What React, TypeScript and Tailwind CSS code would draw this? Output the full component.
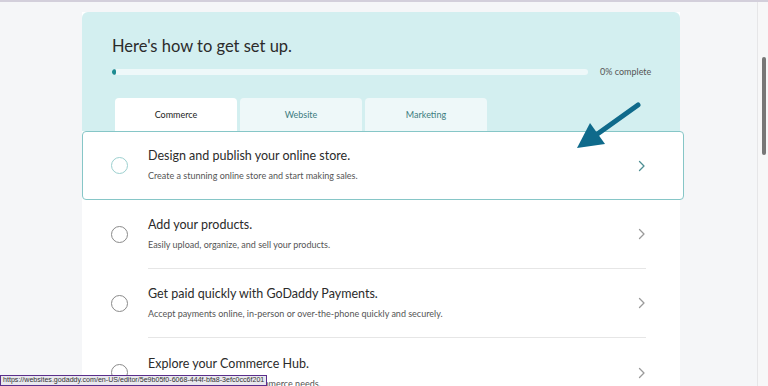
import React from 'react';

const tasks = [
  { title: 'Design and publish your online store.', sub: 'Create a stunning online store and start making sales.', active: true },
  { title: 'Add your products.', sub: 'Easily upload, organize, and sell your products.' },
  { title: 'Get paid quickly with GoDaddy Payments.', sub: 'Accept payments online, in-person or over-the-phone quickly and securely.' },
  { title: 'Explore your Commerce Hub.', sub: 'Track and manage all your commerce needs.' },
];

const tabs = ['Commerce', 'Website', 'Marketing'];

function Chevron({ active }: { active?: boolean }) {
  return (
    <svg width="8" height="12" viewBox="0 0 8 12" className="shrink-0">
      <polyline points="1.5,1.5 6,6 1.5,10.5" fill="none" stroke={active ? '#4d8e93' : '#9a9a9a'} strokeWidth="1.3" strokeLinecap="round" strokeLinejoin="round" />
    </svg>
  );
}

function TaskRow({ title, sub, active, last }: { title: string; sub: string; active?: boolean; last?: boolean }) {
  if (active) {
    return (
      <div className="h-[69px] -mr-[4px] flex items-center pl-[28px] pr-[37px] bg-white border-[1.5px] border-[#86c6c7] rounded-[4px]">
        <div className="w-[17px] h-[17px] rounded-full border-[1.5px] border-[#9cd0cf] shrink-0" />
        <div className="flex-1 ml-[20px] pb-[1px]">
          <div className="text-[12.5px] leading-[16px] text-[#2b2b2b]">{title}</div>
          <div className="text-[9px] leading-[12px] mt-[6px] text-[#555]">{sub}</div>
        </div>
        <Chevron active />
      </div>
    );
  }
  return (
    <div className="h-[69px] flex items-center pl-[29px] pr-[34px]">
      <div className="w-[17px] h-[17px] rounded-full border-[1.5px] border-[#8a8a8a] shrink-0" />
      <div className={'flex-1 self-stretch flex items-center ml-[20px]' + (last ? '' : ' border-b border-[#e6e6e6]')}>
        <div className="flex-1 -ml-[33px] pl-[33px]">
          <div className="text-[12.5px] leading-[16px] text-[#2b2b2b]">{title}</div>
          <div className="text-[9px] leading-[12px] mt-[6px] text-[#555]">{sub}</div>
        </div>
        <Chevron />
      </div>
    </div>
  );
}

export default function App() {
  return (
    <div className="relative w-[768px] h-[386px] overflow-hidden bg-[#f5f6f8] border-t-2 border-[#d3cfdb] flex font-['Lato',sans-serif]">
      <div className="flex-1 pl-[82px] pr-[77px] pt-[10px]">
        <div className="h-full bg-white flex flex-col">
          {/* Setup header */}
          <div className="bg-[#d3eff0] rounded-t-[6px] px-[30px] pt-[22px]">
            <div className="text-[16.5px] leading-[24px] text-[#2b2b2b]">Here's how to get set up.</div>
            <div className="flex items-center mt-[7px] h-[13px]">
              <div className="flex-1 h-[6px] rounded-full bg-[#eef8f9] overflow-hidden">
                <div className="w-[4px] h-full bg-[#1e8c92] rounded-full" />
              </div>
              <div className="ml-[12px] w-[50px] whitespace-nowrap text-[9px] text-[#555]">0% complete</div>
            </div>
            <div className="flex gap-[3px] ml-[3px] mt-[20px]">
              {tabs.map((t, i) => (
                <div
                  key={t}
                  className={
                    'w-[122px] h-[33px] rounded-t-[4px] flex items-center justify-center text-[9px] ' +
                    (i === 0 ? 'bg-white text-[#222]' : 'bg-[#eef8f9] text-[#3d7c80]')
                  }
                >
                  {t}
                </div>
              ))}
            </div>
          </div>
          {/* Tasks */}
          <div className="flex flex-col">
            {tasks.map((t, i) => (
              <TaskRow key={t.title} {...t} last={i === tasks.length - 1} />
            ))}
          </div>
        </div>
      </div>

      {/* Scrollbar */}
      <div className="w-[11px] bg-[#f7f7f8] border-l border-[#e6e6e8] pt-[55px] pl-[4px]">
        <div className="w-[4px] h-[98px] rounded-full bg-[#777]" />
      </div>

      {/* Annotation arrow */}
      <svg className="absolute left-[570px] top-[96px]" width="76" height="56" viewBox="570 96 76 56">
        <line x1="638" y1="103" x2="596" y2="133" stroke="#0f6a8b" strokeWidth="5" strokeLinecap="round" />
        <polygon points="577,146 590,121 605,142" fill="#0f6a8b" />
      </svg>

      {/* Link status bar */}
      <div className="absolute left-0 bottom-0 h-[11px] px-[2px] bg-[#e9e8ee] border border-[#5b2f8c] flex items-center font-['Liberation_Sans',sans-serif] text-[7.1px] leading-none text-[#333]">
        https://websites.godaddy.com/en-US/editor/5e9b05f0-6068-444f-bfa8-3efc0cc6f201
      </div>
    </div>
  );
}
